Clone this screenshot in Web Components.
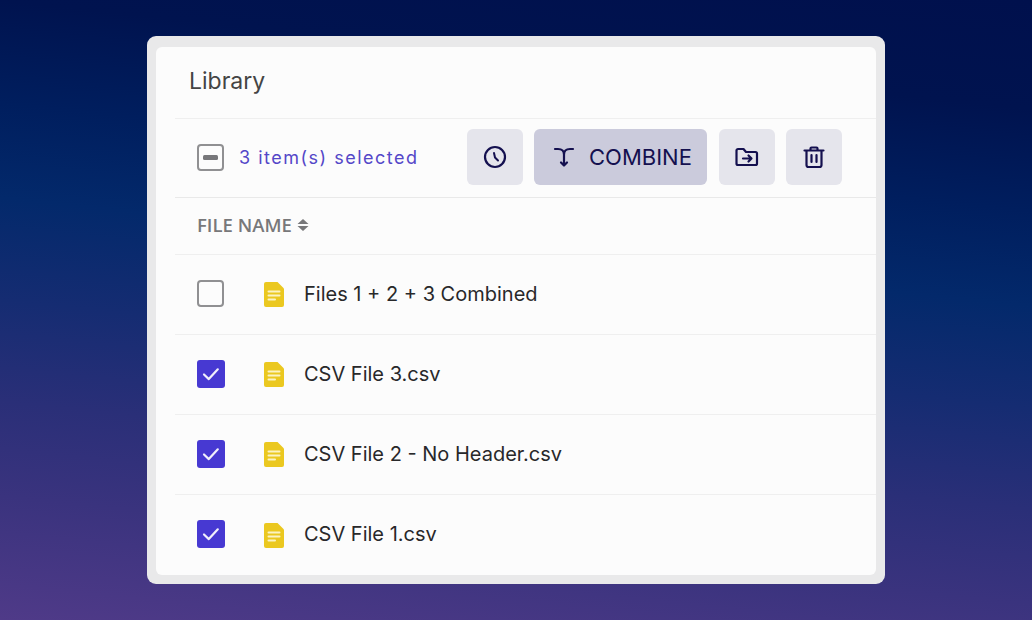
<!DOCTYPE html>
<html lang="en">
<head>
<meta charset="utf-8">
<title>Library</title>
<style>
  html, body { margin: 0; height: 620px; overflow: hidden; }
  body {
    background: linear-gradient(186deg, #00104d 0%, #00134f 15%, #001e5e 29%, #03296b 42%, #152c72 56%, #2a2f78 70%, #3a337e 83%, #4f3a88 100%);
    font-family: Inter, "Open Sans", sans-serif;
    display: flex;
    justify-content: center;
    align-items: flex-start;
    padding-top: 36px;
    box-sizing: border-box;
  }
</style>
</head>
<body>
<library-panel>
  <panel-toolbar count="3"></panel-toolbar>
  <file-row name="Files 1 + 2 + 3 Combined"></file-row>
  <file-row name="CSV File 3.csv" checked></file-row>
  <file-row name="CSV File 2 - No Header.csv" checked></file-row>
  <file-row name="CSV File 1.csv" checked></file-row>
</library-panel>

<script>
// Outer card with the title and the column header
class LibraryPanel extends HTMLElement {
  constructor() {
    super();
    const root = this.attachShadow({ mode: 'open' });
    root.innerHTML = `
      <style>
        :host {
          display: block;
          width: 738px;
          height: 548px;
          box-sizing: border-box;
          padding: 11px 9px 9px;
          background: #e9e9ea;
          border-radius: 9px;
        }
        .inner {
          height: 100%;
          background: #fcfcfc;
          border-radius: 6px;
          padding-left: 19px;
          box-sizing: border-box;
          display: flex;
          flex-direction: column;
        }
        .title {
          height: 72px;
          padding: 0 0 4px 14px;
          box-sizing: border-box;
          display: flex;
          align-items: center;
          font-size: 23px;
          color: #444;
          border-bottom: 1px solid #efefef;
        }
        .head {
          height: 57px;
          box-sizing: border-box;
          padding: 0 0 3px 22px;
          display: flex;
          align-items: center;
          gap: 5px;
          font-family: "Open Sans", sans-serif;
          font-weight: 600;
          font-size: 18.500px;
          color: #78787a;
          border-bottom: 1px solid #efefef;
        }
        svg { width: 12px; height: 14px; fill: #78787a; }
      </style>
      <div class="inner">
        <div class="title">Library</div>
        <slot name="toolbar"></slot>
        <div class="head">FILE NAME
          <svg viewBox="0 0 12 14"><path d="M6 1l5.500 5H.5zM6 13L.5 8h11z"/></svg>
        </div>
        <slot></slot>
      </div>`;
  }
  connectedCallback() {
    const bar = this.querySelector('panel-toolbar');
    if (bar) bar.slot = 'toolbar';
  }
}
customElements.define('library-panel', LibraryPanel);

// Checkbox: state is empty, partial or checked
class CheckBox extends HTMLElement {
  static get observedAttributes() { return ['state']; }
  constructor() {
    super();
    this.attachShadow({ mode: 'open' });
  }
  connectedCallback() { this._render(); }
  attributeChangedCallback() { this._render(); }
  _render() {
    const state = this.getAttribute('state') || 'empty';
    let mark = '';
    if (state === 'checked') {
      mark = '<svg viewBox="0 0 28 28"><path d="M7 14.500l4.800 4.600 9-9.800" fill="none" stroke="#f1f0fb" stroke-width="2.200" stroke-linecap="round" stroke-linejoin="round"/></svg>';
    } else if (state === 'partial') {
      mark = '<svg viewBox="0 0 23 23"><rect x="4" y="9" width="15" height="5" rx="1.500" fill="#77777a"/></svg>';
    }
    this.shadowRoot.innerHTML = `
      <style>
        :host {
          display: block;
          width: 27px;
          height: 27px;
          margin-right: 1px;
          box-sizing: border-box;
          border-radius: 4px;
          border: 2px solid #909092;
          background: #fcfcfc;
        }
        :host([state="checked"]) {
          width: 28px;
          height: 28px;
          margin-right: 0;
          background: #4739d2;
          border: none;
          border-radius: 3px;
        }
        svg { display: block; width: 100%; height: 100%; }
      </style>${mark}`;
  }
}
customElements.define('check-box', CheckBox);

// Square or wide action button
class ActionButton extends HTMLElement {
  constructor() {
    super();
    const root = this.attachShadow({ mode: 'open' });
    root.innerHTML = `
      <style>
        :host {
          display: flex;
          align-items: center;
          justify-content: center;
          width: 56px;
          height: 56px;
          border-radius: 6px;
          background: #e5e5ec;
          color: #14104f;
        }
        :host([primary]) {
          width: 173px;
          margin-right: 1px;
          background: #cbcbdc;
          gap: 13px;
          font-size: 22px;
          justify-content: flex-start;
          padding-left: 18px;
          box-sizing: border-box;
        }
      </style>
      <slot name="icon"></slot><slot></slot>`;
  }
}
customElements.define('action-button', ActionButton);

// Selection summary and actions
class PanelToolbar extends HTMLElement {
  constructor() {
    super();
    const root = this.attachShadow({ mode: 'open' });
    const count = this.getAttribute('count') || '0';
    const stroke = 'fill="none" stroke="#14104f" stroke-width="2.200" stroke-linecap="round" stroke-linejoin="round"';
    root.innerHTML = `
      <style>
        :host {
          display: flex;
          align-items: center;
          height: 79px;
          box-sizing: border-box;
          padding: 0 0 2px 22px;
          border-bottom: 1px solid #e9e9e9;
        }
        .count {
          margin-left: 14px;
          font-size: 18px;
          letter-spacing: 1.500px;
          color: #5447c8;
          flex: 1;
        }
        .actions { display: flex; gap: 11px; margin-right: 34px; }
        svg { display: block; width: 24px; height: 24px; }
      </style>
      <check-box state="partial"></check-box>
      <span class="count">${count} item(s) selected</span>
      <div class="actions">
        <action-button>
          <svg slot="icon" viewBox="0 0 24 24" ${stroke}><circle cx="12" cy="12" r="10"/><path d="M11 8l1 4.500 3 3" stroke-width="2"/></svg>
        </action-button>
        <action-button primary>
          <svg slot="icon" viewBox="0 0 24 24" ${stroke}><path d="M3 4h3c3.500 0 6 2 6 5.500V20M21 4h-3c-3.500 0-6 2-6 5.500M9 17.500l3 3 3-3"/></svg>
          COMBINE
        </action-button>
        <action-button>
          <svg slot="icon" viewBox="0 0 24 24" ${stroke}><path d="M1.500 5.500A1.500 1.500 0 0 1 3 4h5.500L11 7h9.500A1.500 1.500 0 0 1 22 8.500v10a1.500 1.500 0 0 1-1.500 1.500H3a1.500 1.500 0 0 1-1.500-1.500zM8 13.500h8.500M13.500 10.500l3 3-3 3"/></svg>
        </action-button>
        <action-button>
          <svg slot="icon" viewBox="0 0 24 24" ${stroke}><path d="M2.500 5.500h19M8.500 5.500V3.500a1 1 0 0 1 1-1h5a1 1 0 0 1 1 1v2M4.500 5.500V20a2 2 0 0 0 2 2h11a2 2 0 0 0 2-2V5.500M9.500 10v7M14.500 10v7"/></svg>
        </action-button>
      </div>`;
  }
}
customElements.define('panel-toolbar', PanelToolbar);

// One file in the list
class FileRow extends HTMLElement {
  constructor() {
    super();
    const root = this.attachShadow({ mode: 'open' });
    const name = this.getAttribute('name') || '';
    const state = this.hasAttribute('checked') ? 'checked' : 'empty';
    root.innerHTML = `
      <style>
        :host {
          display: flex;
          align-items: center;
          height: 80px;
          box-sizing: border-box;
          padding: 0 0 2px 22px;
          border-bottom: 1px solid #efefef;
          font-size: 20px;
          color: #28282a;
        }
        :host(:last-child) { border-bottom: none; }
        svg { display: block; width: 20px; height: 25px; margin: 2px 20px 0 39px; }
      </style>
      <check-box state="${state}"></check-box>
      <svg viewBox="0 0 20 25">
        <path d="M2 0h11.500L20 6.500V23a2 2 0 0 1-2 2H2a2 2 0 0 1-2-2V2a2 2 0 0 1 2-2z" fill="#ebc820"/>
        <path d="M4.500 9.500h11M4.500 13.500h11M4.500 17.500h6.500" stroke="#fbf3c4" stroke-width="2" stroke-linecap="round"/>
      </svg>
      <span>${name}</span>`;
  }
}
customElements.define('file-row', FileRow);
</script>
</body>
</html>
